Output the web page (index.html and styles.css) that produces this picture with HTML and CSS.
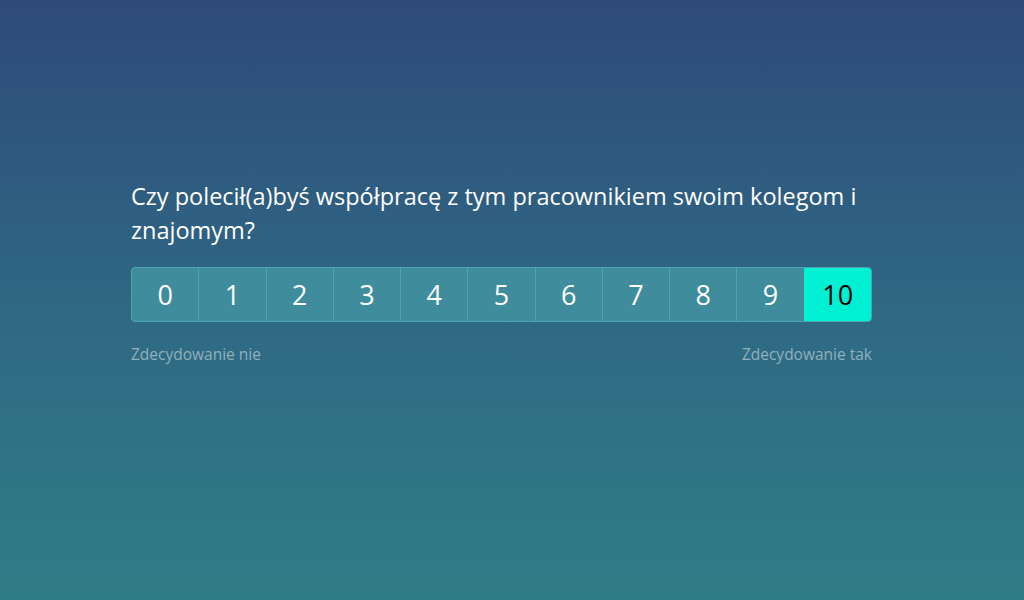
FILE: index.html
```html
<!DOCTYPE html>
<html>
<head>
    <meta charset="utf-8">
    <title>Ankieta</title>
    <link rel="stylesheet" href="styles.css">
</head>
<body>
    <div class="survey">
        <div class="question">Czy polecił(a)byś współpracę z tym pracownikiem swoim kolegom i znajomym?</div>

        <div class="scale">
            <div class="score">0</div>
            <div class="score">1</div>
            <div class="score">2</div>
            <div class="score">3</div>
            <div class="score">4</div>
            <div class="score">5</div>
            <div class="score">6</div>
            <div class="score">7</div>
            <div class="score">8</div>
            <div class="score">9</div>
            <div class="score selected">10</div>
        </div>

        <div class="labels">
            <span>Zdecydowanie nie</span>
            <span>Zdecydowanie tak</span>
        </div>
    </div>
</body>
</html>
```

FILE: styles.css
```css
body {
    margin: 0;
    height: 600px;
    overflow: hidden;
    background: linear-gradient(to bottom, #2e4a7a 0%, #2f6a84 55%, #2f7d87 100%);
    font-family: 'Open Sans', 'Noto Sans', sans-serif;
    color: #ffffff;
}

.survey {
    width: 762px;
    margin: 0 auto;
    padding-top: 179px;
}

/* Question */
.question {
    width: 740px;
    font-size: 23.5px;
    line-height: 34px;
    letter-spacing: 0;
    margin-bottom: 20px;
}

/* Score Scale */
.scale {
    display: flex;
    width: 741px;
    height: 55px;
    border: 1px solid #4aa6b2;
    border-radius: 4px;
    box-sizing: border-box;
    overflow: hidden;
    background: #3e8c9c;
}

.score {
    flex: 1;
    display: flex;
    align-items: center;
    justify-content: center;
    font-size: 27px;
    border-left: 1px solid #4aa6b2;
}

.score:first-child {
    border-left: none;
}

.score.selected {
    background: #00f0d4;
    color: #000000;
    border-left-color: #00f0d4;
}

/* Labels */
.labels {
    display: flex;
    justify-content: space-between;
    width: 741px;
    margin-top: 21px;
    font-size: 15.5px;
    color: #8fb1bd;
}
```
